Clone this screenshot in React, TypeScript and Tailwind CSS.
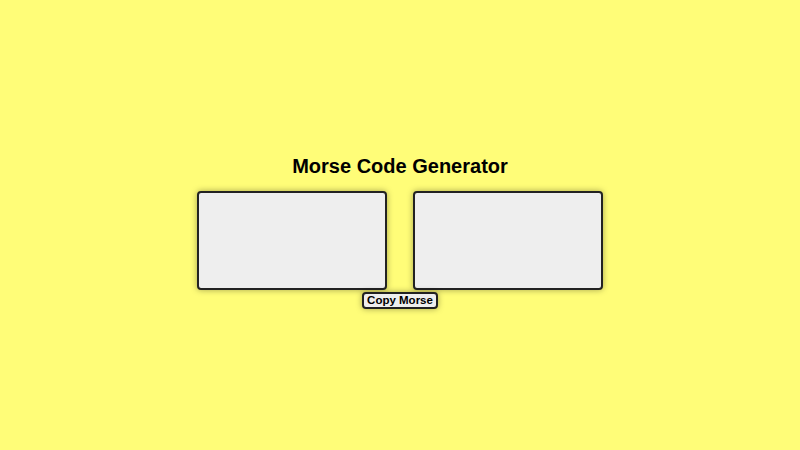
export default function App() {
  return (
    <div
      className="w-[800px] h-[450px] bg-[#fffd78] flex flex-col items-center pt-[154px]"
      style={{ fontFamily: '"Liberation Sans", Arial, sans-serif' }}
    >
      <h1 className="text-[20px] leading-[24px] font-bold text-black m-0">Morse Code Generator</h1>
      <div className="flex gap-[26px] mt-[13px]">
        <textarea className="w-[190px] h-[99px] bg-[#eeeeee] border-2 border-[#222] rounded-[4px] shadow-[0_0_6px_rgba(0,0,0,0.35)] resize-none outline-none" />
        <textarea className="w-[190px] h-[99px] bg-[#eeeeee] border-2 border-[#222] rounded-[4px] shadow-[0_0_6px_rgba(0,0,0,0.35)] resize-none outline-none" />
      </div>
      <button className="mt-[2px] h-[17px] px-[3.5px] bg-[#eeeeee] border-2 border-[#222] rounded-[4px] shadow-[0_0_6px_rgba(0,0,0,0.35)] text-[11.5px] leading-[13px] font-bold text-black">
        Copy Morse
      </button>
    </div>
  );
}
